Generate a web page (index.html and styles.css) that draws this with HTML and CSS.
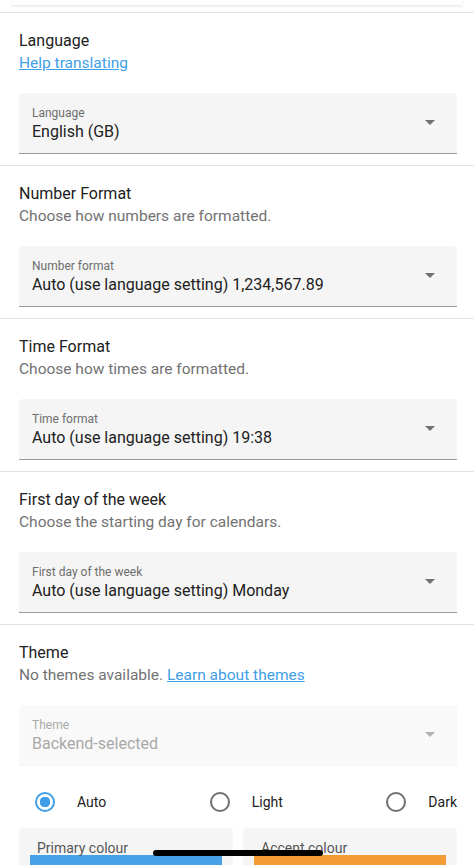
FILE: index.html
```html
<!DOCTYPE html>
<html lang="en">
<head>
    <meta charset="UTF-8">
    <meta name="viewport" content="width=device-width, initial-scale=1.0">
    <title>Profile settings</title>
    <link rel="stylesheet" href="styles.css">
</head>
<body>
    <!-- card from the previous block, mostly scrolled away -->
    <div class="top-card"></div>

    <div class="setting">
        <div class="setting-title">Language</div>
        <div class="setting-desc"><a href="#" class="link">Help translating</a></div>
        <div class="select">
            <div class="select-text">
                <span class="select-label">Language</span>
                <span class="select-value">English (GB)</span>
            </div>
            <span class="arrow"></span>
        </div>
    </div>

    <div class="setting">
        <div class="setting-title">Number Format</div>
        <div class="setting-desc">Choose how numbers are formatted.</div>
        <div class="select">
            <div class="select-text">
                <span class="select-label">Number format</span>
                <span class="select-value">Auto (use language setting) 1,234,567.89</span>
            </div>
            <span class="arrow"></span>
        </div>
    </div>

    <div class="setting">
        <div class="setting-title">Time Format</div>
        <div class="setting-desc">Choose how times are formatted.</div>
        <div class="select">
            <div class="select-text">
                <span class="select-label">Time format</span>
                <span class="select-value">Auto (use language setting) 19:38</span>
            </div>
            <span class="arrow"></span>
        </div>
    </div>

    <div class="setting">
        <div class="setting-title">First day of the week</div>
        <div class="setting-desc">Choose the starting day for calendars.</div>
        <div class="select">
            <div class="select-text">
                <span class="select-label">First day of the week</span>
                <span class="select-value">Auto (use language setting) Monday</span>
            </div>
            <span class="arrow"></span>
        </div>
    </div>

    <div class="setting">
        <div class="setting-title">Theme</div>
        <div class="setting-desc">No themes available. <a href="#" class="link">Learn about themes</a></div>
        <div class="select disabled">
            <div class="select-text">
                <span class="select-label">Theme</span>
                <span class="select-value">Backend-selected</span>
            </div>
            <span class="arrow"></span>
        </div>

        <div class="radio-row">
            <label class="radio-item">
                <span class="radio checked"></span>
                <span>Auto</span>
            </label>
            <label class="radio-item">
                <span class="radio"></span>
                <span>Light</span>
            </label>
            <label class="radio-item">
                <span class="radio"></span>
                <span>Dark</span>
            </label>
        </div>

        <div class="colours">
            <div class="colour-card">
                <div class="colour-label">Primary colour</div>
                <div class="colour-bar primary"></div>
            </div>
            <div class="colour-card">
                <div class="colour-label">Accent colour</div>
                <div class="colour-bar accent"></div>
            </div>
        </div>
    </div>

    <div class="home-bar"></div>
</body>
</html>
```

FILE: styles.css
```css
body {
    margin: 0;
    background-color: #ffffff;
    font-family: Roboto, "Noto Sans", sans-serif;
    color: #212121;
    overflow: hidden;
}

.top-card {
    height: 5px;
    margin: 0 12px 7px;
    background-color: #ffffff;
    box-shadow: 0 1px 3px rgba(0, 0, 0, 0.12); /* sombra de la tarjeta de arriba */
}

.setting {
    border-top: 1px solid #e3e3e3;
    padding: 16px 17px 11px 19px;
}

.setting-title {
    font-size: 16px;
    line-height: 24px;
}

.setting-desc {
    font-size: 15.5px;
    line-height: 20px;
    color: #727272;
}

.link {
    color: #3fa0e6;
    text-decoration: underline;
}

.select {
    display: flex;
    align-items: center;
    justify-content: space-between;
    margin-top: 20px;
    height: 60px;
    padding: 0 22px 0 13px;
    background-color: #f5f5f5;
    border-radius: 4px 4px 0 0;
    border-bottom: 1px solid #9a9a9a;
}

.select-text {
    display: flex;
    flex-direction: column;
    padding-top: 2px;
}

.select-label {
    font-size: 12px;
    line-height: 16px;
    color: #6e6e6e;
}

.select-value {
    font-size: 16px;
    line-height: 22px;
    color: #212121;
}

.arrow {
    width: 0;
    height: 0;
    border-left: 5px solid transparent;
    border-right: 5px solid transparent;
    border-top: 5px solid #707070;
    margin-top: -2px;
}

.select.disabled {
    background-color: #f9f9f9;
    border-bottom: 1px solid #f3f3f3;
}

.select.disabled .select-label,
.select.disabled .select-value {
    color: #a9a9a9;
}

.select.disabled .arrow {
    border-top-color: #b3b3b3;
}

.radio-row {
    display: flex;
    justify-content: space-between;
    align-items: center;
    height: 48px;
    margin-top: 12px;
    padding-left: 2px;
}

.radio-item {
    display: flex;
    align-items: center;
    gap: 8px;
    font-size: 14px;
    color: #212121;
}

.radio {
    width: 48px;
    height: 48px;
    display: flex;
    align-items: center;
    justify-content: center;
}

.radio::before {
    content: "";
    width: 16px;
    height: 16px;
    border-radius: 50%;
    border: 2px solid #6f6f6f;
}

.radio.checked::before {
    border-color: #3f9ee6;
    background: radial-gradient(circle, #3f9ee6 0 5px, transparent 5.5px);
}

.colours {
    display: grid;
    grid-template-columns: 1fr 1fr;
    gap: 10px;
    margin-top: 2px;
}

.colour-card {
    background-color: #f5f5f5;
    border-radius: 4px;
    padding: 10px 11px 0;
    height: 60px;
}

.colour-label {
    font-size: 14px;
    line-height: 20px;
    color: #555555;
    padding-left: 7px;
}

.colour-bar {
    height: 30px;
    margin-top: -3px;
}

.colour-bar.primary {
    background-color: #47a1e6;
}

.colour-bar.accent {
    background-color: #f39c35;
}

.home-bar {
    position: fixed; /* indicador de inicio del teléfono, encima del contenido */
    left: 153px;
    bottom: 9px;
    width: 170px;
    height: 6px;
    border-radius: 3px;
    background-color: #000000;
}
```
